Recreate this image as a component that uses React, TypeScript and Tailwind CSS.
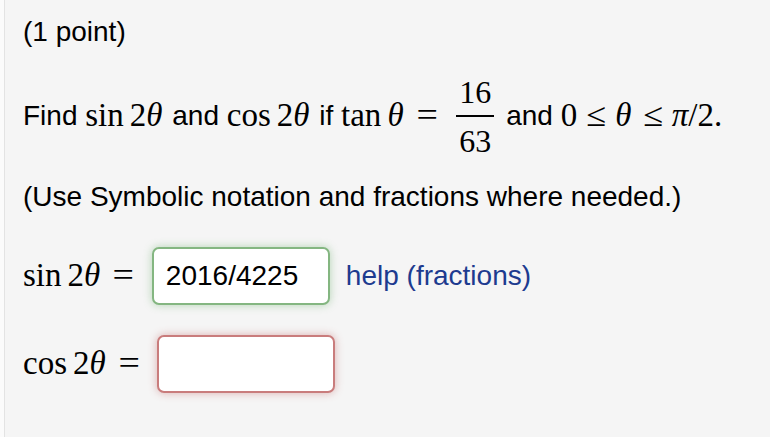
import React from "react";

const sans = "font-['Liberation_Sans',Arial,sans-serif]";
const serif = "font-['Liberation_Serif','Times_New_Roman',serif]";

const Theta: React.FC<{ className?: string }> = ({ className = "" }) => (
  <i className={`italic pr-[2px] ${className}`}>θ</i>
);

const Math: React.FC<{ children: React.ReactNode; className?: string }> = ({ children, className = "" }) => (
  <span className={`${serif} text-[33px] text-black whitespace-nowrap inline-flex items-baseline ${className}`}>
    {children}
  </span>
);

// MathJax's equals sign is a bit wider than the Times one
const Eq: React.FC<{ className?: string }> = ({ className = "" }) => (
  <span className={`inline-block mx-[12px] scale-x-[1.15] ${className}`}>=</span>
);

const Le = () => <span className="inline-block mx-[10px] scale-x-[1.1]">≤</span>;

const Fraction: React.FC<{ num: string; den: string }> = ({ num, den }) => (
  <span className={`${serif} inline-flex flex-col items-center text-[32px] leading-none ml-[8px] mr-[12px]`}>
    <span className="px-[3px] pb-[7px]">{num}</span>
    <span className="self-stretch h-[2px] bg-black" />
    <span className="px-[3px] pt-[8px]">{den}</span>
  </span>
);

const AnswerBox: React.FC<{ value?: string; tone: "good" | "bad" }> = ({ value = "", tone }) => (
  <div
    className={`w-[178px] h-[58px] rounded-[7px] bg-white border-2 flex items-center px-[12px] ${sans} text-[28px] text-black ${
      tone === "good"
        ? "border-[#84b681] shadow-[0_0_8px_rgba(100,170,100,0.45)]"
        : "border-[#c97c7c] shadow-[0_0_8px_rgba(190,90,90,0.45)]"
    }`}
  >
    {value}
  </div>
);

export default function App() {
  return (
    <div className="w-[770px] h-[437px] flex bg-[#f5f5f5]">
      <div className="w-[5px] bg-[#fbfbfb] border-r border-[#e3e3e3] shrink-0" />
      <div className={`flex-1 pt-[16px] pl-[18px] ${sans} text-[28px] text-black`}>
        <p className="h-[32px] leading-[32px]">(1 point)</p>

        <div className="mt-[28px] h-[80px] flex items-center whitespace-nowrap">
          <span>Find&nbsp;</span>
          <Math>
            sin<span className="ml-[6px]">2</span>
            <Theta />
          </Math>
          <span>&nbsp;and&nbsp;</span>
          <Math>
            cos<span className="ml-[6px]">2</span>
            <Theta />
          </Math>
          <span>&nbsp;if&nbsp;</span>
          <Math>
            tan<Theta className="ml-[6px]" />
            <Eq />
          </Math>
          <Fraction num="16" den="63" />
          <span>and&nbsp;</span>
          <Math>
            0<Le />
            <Theta />
            <Le />
            <i>π</i>/2.
          </Math>
        </div>

        <p className="mt-[25px] h-[32px] leading-[32px]">(Use Symbolic notation and fractions where needed.)</p>

        <div className="mt-[34px] flex items-center">
          <Math className="mr-[7px]">
            sin<span className="ml-[6px]">2</span>
            <Theta />
            <Eq />
          </Math>
          <AnswerBox value="2016/4225" tone="good" />
          <a className="ml-[16px] text-[#1d3b8f]">help (fractions)</a>
        </div>

        <div className="mt-[30px] flex items-center">
          <Math className="mr-[7px]">
            cos<span className="ml-[6px]">2</span>
            <Theta />
            <Eq />
          </Math>
          <AnswerBox tone="bad" />
        </div>
      </div>
    </div>
  );
}
